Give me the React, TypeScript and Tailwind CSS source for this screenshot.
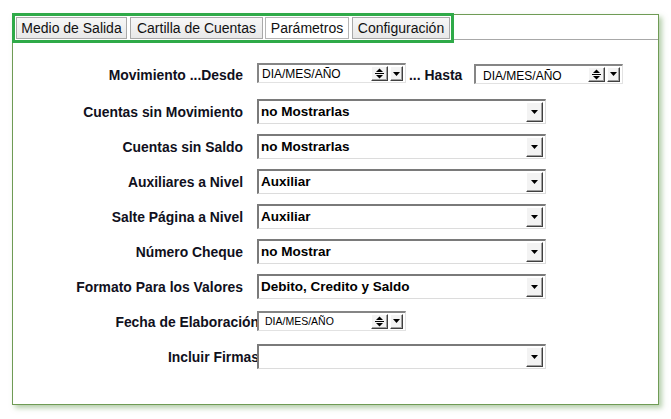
import React from "react";

const Spin = () => (
  <div className="w-[17px] h-[15px] bg-[#f3f3f3] border border-t-[#ffffff] border-l-[#ffffff] border-b-[#404040] border-r-[#404040] shadow-[inset_-1px_-1px_0_#a0a0a0] flex items-center justify-center">
    <svg width="11" height="11" viewBox="0 0 11 11">
      <polygon points="5.5,0.5 9,4 2,4" fill="#000" />
      <rect x="1" y="5" width="9" height="1" fill="#000" />
      <polygon points="2,7 9,7 5.5,10.5" fill="#000" />
    </svg>
  </div>
);

const Drop = ({ w = 13, h = 15 }: { w?: number; h?: number }) => (
  <div
    className="bg-[#f3f3f3] border border-t-[#ffffff] border-l-[#ffffff] border-b-[#404040] border-r-[#404040] shadow-[inset_-1px_-1px_0_#a0a0a0] flex items-center justify-center"
    style={{ width: w, height: h }}
  >
    <svg width="7" height="4" viewBox="0 0 7 4">
      <polygon points="0,0 7,0 3.5,4" fill="#000" />
    </svg>
  </div>
);

const DateBox = ({ small = false, low = false }: { small?: boolean; low?: boolean }) => (
  <div className="w-[149px] h-[20px] bg-white border-t-2 border-l-2 border-t-[#858585] border-l-[#858585] border-b border-r border-b-[#e2e2e2] border-r-[#e2e2e2] flex items-center">
    <span
      className={
        small
          ? "flex-1 pl-[6px] text-[10.5px] text-black leading-none"
          : low
          ? "flex-1 pl-[7px] pt-[4px] text-[12px] text-black leading-none"
          : "flex-1 pl-[3px] text-[12px] text-black leading-none"
      }
    >
      DIA/MES/AÑO
    </span>
    <Spin />
    <div className="w-[2px]" />
    <Drop />
    <div className="w-[2px]" />
  </div>
);

const Select = ({ value }: { value: string }) => (
  <div className="w-[289px] h-[25px] bg-white border-t-2 border-l-2 border-t-[#7a7a7a] border-l-[#7a7a7a] border-b border-r border-b-[#dcdcdc] border-r-[#dcdcdc] flex items-center">
    <span className="flex-1 pl-[2px] text-[13.5px] font-bold text-black leading-none">{value}</span>
    <Drop w={17} h={20} />
    <div className="w-[2px]" />
  </div>
);

const Label = ({ children, wide = false }: { children: React.ReactNode; wide?: boolean }) => (
  <div
    className={
      wide
        ? "w-[246px] shrink-0 text-right text-[13.9px] font-bold text-[#101020] whitespace-nowrap"
        : "w-[230px] shrink-0 text-right text-[13.9px] font-bold text-[#101020] whitespace-nowrap"
    }
  >
    {children}
  </div>
);

export default function App() {
  const tabs = [
    { t: "Medio de Salida", w: "w-[111px]", ml: "", active: false },
    { t: "Cartilla de Cuentas", w: "w-[133px]", ml: "ml-[3px]", active: false },
    { t: "Parámetros", w: "w-[84px]", ml: "ml-[2px]", active: true },
    { t: "Configuración", w: "w-[98px]", ml: "ml-[3px]", active: false },
  ];
  return (
    <div
      className="w-[671px] h-[419px] bg-white overflow-hidden pt-[14px]"
      style={{ fontFamily: '"Liberation Sans", Arial, sans-serif' }}
    >
      <div className="ml-[12px] w-[647px] h-[391px] border border-[#6f9b55] bg-white shadow-[3px_3px_5px_rgba(110,160,90,0.5)]">
        <div className="flex items-start">
          <div className="-mt-[2px] -ml-[1px] border-[3px] border-[#2faa48] flex pt-[1px] pl-[1px] pr-[1px] h-[30px]">
            {tabs.map((tab) => (
              <div
                key={tab.t}
                className={
                  (tab.active
                    ? "bg-white border-[#b5b5b5] "
                    : "bg-gradient-to-b from-[#f7f7f7] to-[#e8e8e8] border-[#a9a9a9] ") +
                  tab.w +
                  " " +
                  tab.ml +
                  " h-[22px] border flex items-center justify-center text-[14px] text-[#111] leading-none whitespace-nowrap"
                }
              >
                {tab.t}
              </div>
            ))}
          </div>
          <div className="flex-1 h-[25px] border-b border-[#a8a8a8]" />
        </div>

        <div className="mt-[20px] flex flex-col gap-[11px]">
          <div className="h-[24px] mb-[2px] flex items-center">
            <Label>Movimiento ...Desde</Label>
            <div className="ml-[14px] -mt-[4px]">
              <DateBox />
            </div>
            <div className="w-[68px] pl-[3px] text-[13.9px] font-bold text-[#101020] whitespace-nowrap">
              ... Hasta
            </div>
            <div className="-mt-[3px]">
              <DateBox low />
            </div>
          </div>
          <div className="h-[24px] flex items-center">
            <Label>Cuentas sin Movimiento</Label>
            <div className="ml-[14px] -mt-[2px]">
              <Select value="no Mostrarlas" />
            </div>
          </div>
          <div className="h-[24px] flex items-center">
            <Label>Cuentas sin Saldo</Label>
            <div className="ml-[14px] -mt-[2px]">
              <Select value="no Mostrarlas" />
            </div>
          </div>
          <div className="h-[24px] flex items-center">
            <Label>Auxiliares a Nivel</Label>
            <div className="ml-[14px] -mt-[2px]">
              <Select value="Auxiliar" />
            </div>
          </div>
          <div className="h-[24px] flex items-center">
            <Label>Salte Página a Nivel</Label>
            <div className="ml-[14px] -mt-[2px]">
              <Select value="Auxiliar" />
            </div>
          </div>
          <div className="h-[24px] flex items-center">
            <Label>Número Cheque</Label>
            <div className="ml-[14px] -mt-[2px]">
              <Select value="no Mostrar" />
            </div>
          </div>
          <div className="h-[24px] flex items-center">
            <Label>Formato Para los Valores</Label>
            <div className="ml-[14px] -mt-[2px]">
              <Select value="Debito, Credito y Saldo" />
            </div>
          </div>
          <div className="h-[24px] flex items-center">
            <Label wide>Fecha de Elaboración</Label>
            <div className="-ml-[2px] -mt-[3px]">
              <DateBox small />
            </div>
          </div>
          <div className="h-[24px] flex items-center">
            <Label wide>Incluir Firmas</Label>
            <div className="-ml-[2px] -mt-[2px]">
              <Select value="" />
            </div>
          </div>
        </div>
      </div>
    </div>
  );
}
